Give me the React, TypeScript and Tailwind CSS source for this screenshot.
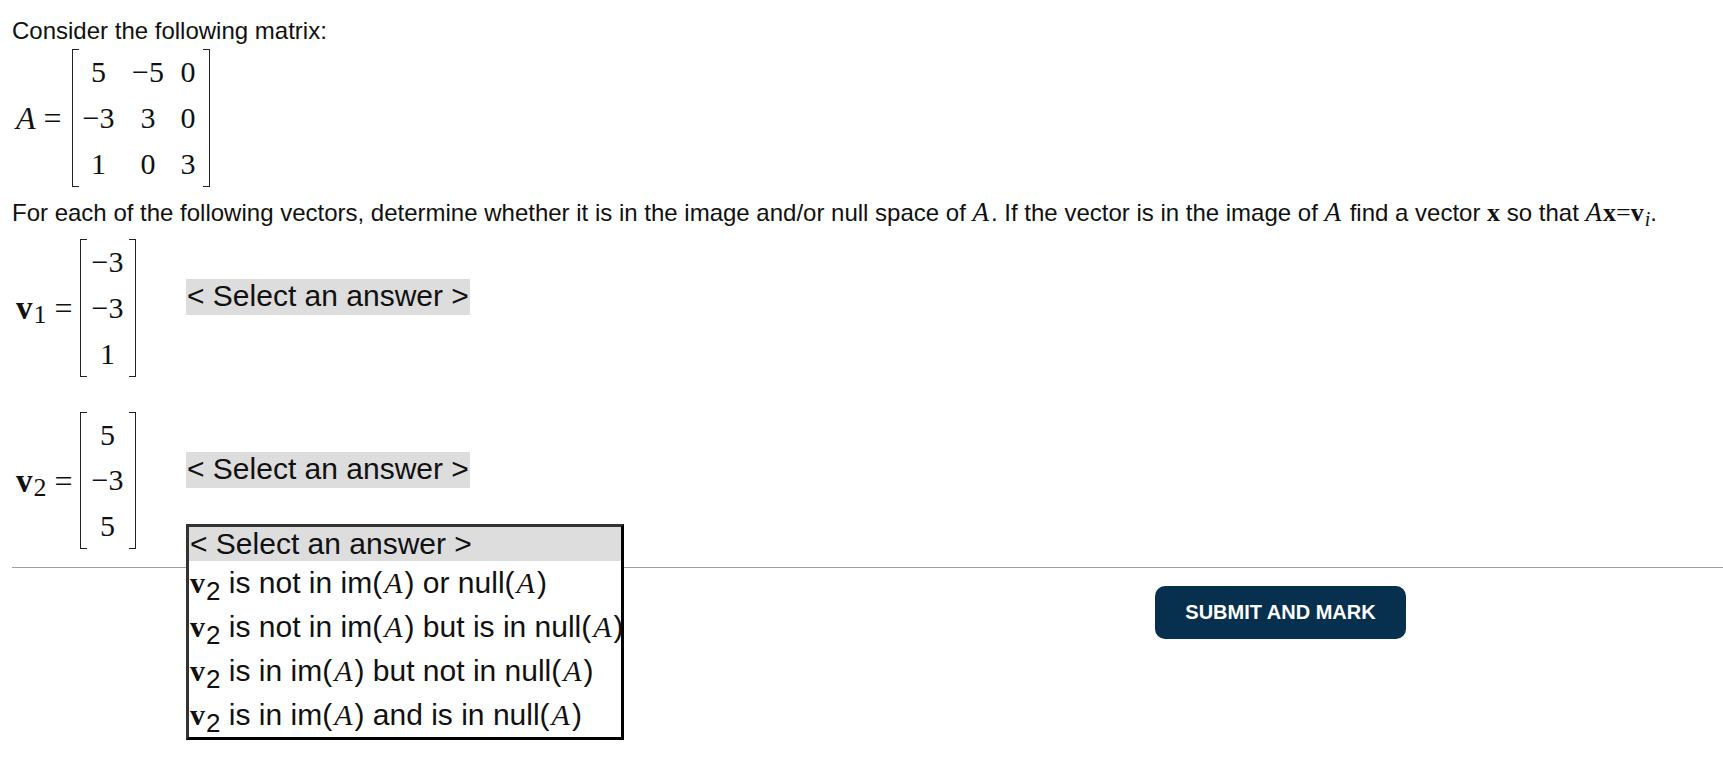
const SERIF = "font-['Liberation_Serif',serif]";

const LeftBracket = () => <div className="w-[7px] shrink-0 border-y border-l border-[#222]"></div>;
const RightBracket = () => <div className="w-[7px] shrink-0 border-y border-r border-[#222]"></div>;

const A = () => <i className="pr-[2px] font-['Liberation_Serif',serif] text-[27px]">A</i>;
const BigA = () => <i className="px-[2px] font-['Liberation_Serif',serif] text-[30px]">A</i>;

const VectorRow = ({ n, values, height, children }: { n: string; values: string[]; height: string; children?: React.ReactNode }) => (
    <div className={`flex ${height}`}>
        <div className="flex w-[80px] items-center pl-[16px] font-['Liberation_Serif',serif] leading-[30px]">
            <b className="text-[33px]">v</b>
            <span className="relative top-[7px] ml-[1px] text-[26px]">{n}</span>
            <span className="ml-[8px] text-[32px]">=</span>
        </div>
        <LeftBracket />
        <div className="grid w-[42px] grid-rows-3 items-center pr-[1px] text-center font-['Liberation_Serif',serif] text-[30px] leading-[30px] text-[#111]">
            {values.map((v, i) => <div key={i}>{v}</div>)}
        </div>
        <RightBracket />
        <div className="relative mt-[40px] ml-[50px] h-[36px] w-[284px] self-start bg-[#dddddd] pl-[1px] text-[30px] leading-[34px] whitespace-nowrap text-[#111]">
            &lt; Select an answer &gt;
            {children}
        </div>
    </div>
);

const Option = ({ children }: { children: React.ReactNode }) => (
    <div className="flex h-[44px] items-center pl-[1px] text-[30px] leading-[34px] whitespace-nowrap">
        <div>
            <b className="font-['Liberation_Serif',serif]">v</b>
            <span className="relative top-[7px] ml-[1px] text-[26px]">2</span> {children}
        </div>
    </div>
);

export default function App() {
    const rows = [["5", "−5", "0"], ["−3", "3", "0"], ["1", "0", "3"]];
    return (
        <div className="h-[772px] w-[1723px] overflow-hidden bg-white font-['Liberation_Sans',Arial,sans-serif] text-[24px] text-[#111]">
            <p className="h-[46px] pt-[16px] pl-[12px] leading-[30px]">Consider the following matrix:</p>

            <div className="mt-[3px] flex h-[138px] pl-[16px]">
                <div className={`flex w-[56px] items-center gap-[8px] leading-[30px] ${SERIF}`}>
                    <i className="text-[32px]">A</i><span className="text-[32px]">=</span>
                </div>
                <LeftBracket />
                <div className={`grid w-[124px] grid-cols-[39px_60px_20px] grid-rows-3 items-center text-center text-[30px] leading-[30px] ${SERIF}`}>
                    {rows.flat().map((v, i) => <div key={i}>{v}</div>)}
                </div>
                <RightBracket />
            </div>

            <p className="mt-[10px] h-[30px] pl-[12px] leading-[30px] whitespace-nowrap">
                For each of the following vectors, determine whether it is in the image and/or null space of <A />. If the vector is in the image of <A /> find a vector <b className={`${SERIF} text-[26px]`}>x</b> so that <span className={`${SERIF} text-[26px]`}><i className="pr-[1px] text-[27px]">A</i><b>x</b>=<b>v</b><i className="relative top-[5px] pl-[1px] text-[20px]">i</i></span>.
            </p>

            <div className="mt-[12px]">
                <VectorRow n="1" height="h-[138px]" values={["−3", "−3", "1"]} />
            </div>
            <div className="mt-[35px]">
                <VectorRow n="2" height="h-[137px]" values={["5", "−3", "5"]}>
                    <div className="absolute top-[72px] left-0 z-10 w-[438px] border-[3px] border-t-[#333] border-r-black border-b-black border-l-[#333] bg-white">
                        <div className="h-[34px] bg-[#dddddd] pl-[1px] leading-[34px]">&lt; Select an answer &gt;</div>
                        <Option>is not in im(<BigA />) or null(<BigA />)</Option>
                        <Option>is not in im(<BigA />) but is in null(<BigA />)</Option>
                        <Option>is in im(<BigA />) but not in null(<BigA />)</Option>
                        <Option>is in im(<BigA />) and is in null(<BigA />)</Option>
                    </div>
                </VectorRow>
            </div>

            <hr className="mt-[18px] ml-[12px] border-t-[1.5px] border-[#a0a0a0]" />

            <div className="mt-[18px] pl-[1155px]">
                <button
                    type="button"
                    className="block h-[53px] w-[251px] rounded-[10px] bg-[#07304f] pb-[1px] text-[20px] font-bold text-white"
                >SUBMIT AND MARK</button>
            </div>
        </div>
    );
}
